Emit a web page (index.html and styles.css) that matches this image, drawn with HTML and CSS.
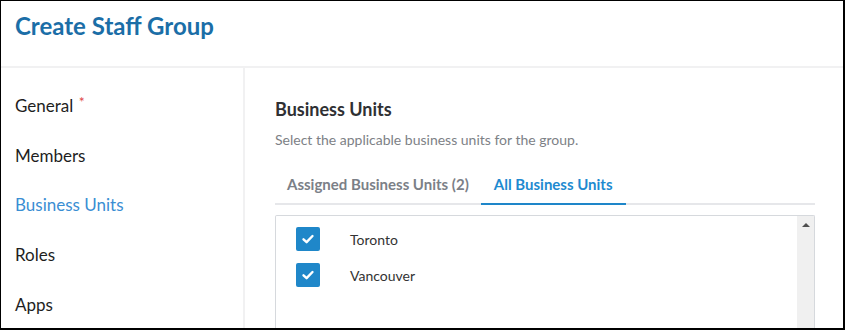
FILE: index.html
```html
<!DOCTYPE html>
<html>
<head>
<meta charset="utf-8">
<link rel="stylesheet" href="styles.css">
</head>
<body>
<div class="frame">
  <header class="header">
    <h1 class="title">Create Staff Group</h1>
  </header>
  <div class="main">
    <nav class="sidebar">
      <div class="nav-item">General <span class="req">*</span></div>
      <div class="nav-item">Members</div>
      <div class="nav-item active">Business Units</div>
      <div class="nav-item">Roles</div>
      <div class="nav-item">Apps</div>
    </nav>
    <section class="content">
      <h2 class="heading">Business Units</h2>
      <p class="desc">Select the applicable business units for the group.</p>
      <div class="tabs">
        <div class="tab">Assigned Business Units (2)</div>
        <div class="tab active">All Business Units</div>
      </div>
      <div class="listbox">
        <div class="list">
          <label class="row"><span class="check"><svg viewBox="0 0 24 24" width="24" height="24"><path d="M7.5 12.3 L10.6 15.2 L16.5 9" fill="none" stroke="#fff" stroke-width="2.4" stroke-linecap="round" stroke-linejoin="round"/></svg></span><span class="label">Toronto</span></label>
          <label class="row"><span class="check"><svg viewBox="0 0 24 24" width="24" height="24"><path d="M7.5 12.3 L10.6 15.2 L16.5 9" fill="none" stroke="#fff" stroke-width="2.4" stroke-linecap="round" stroke-linejoin="round"/></svg></span><span class="label">Vancouver</span></label>
        </div>
        <div class="scrollbar"><span class="arrow"></span></div>
      </div>
    </section>
  </div>
</div>
</body>
</html>
```

FILE: styles.css
```css
* { box-sizing: border-box; }
html, body { margin: 0; padding: 0; background: #fff; }
body { font-family: Lato, "Open Sans", sans-serif; }

.frame {
  width: 845px;
  height: 330px;
  border-left: 1px solid #000;
  border-top: 1px solid #000;
  border-right: 2px solid #000;
  border-bottom: 2px solid #000;
  display: flex;
  flex-direction: column;
  overflow: hidden;
}

.header {
  height: 67px;
  flex: none;
  border-bottom: 2px solid #f1f1f2;
  padding-left: 14px;
}
.title {
  margin: 0;
  padding-top: 8px;
  font-size: 24px;
  line-height: 34px;
  font-weight: 700;
  color: #1b6ea7;
}

.main {
  flex: 1;
  display: flex;
  min-height: 0;
}

.sidebar {
  width: 244px;
  flex: none;
  border-right: 2px solid #f1f1f2;
  padding-top: 13px;
  padding-left: 14px;
}
.nav-item {
  height: 49.7px;
  line-height: 49px;
  font-size: 17px;
  color: #1e1e1e;
}
.nav-item.active { color: #3a8ed3; }
.req {
  color: #e0484a;
  font-size: 14px;
  line-height: 0;
  vertical-align: 5px;
  margin-left: 1px;
}

.content {
  flex: 1;
  padding: 0 28px 0 30px;
  display: flex;
  flex-direction: column;
}
.heading {
  margin: 29px 0 0;
  font-size: 18px;
  line-height: 24px;
  font-weight: 700;
  color: #2f3033;
}
.desc {
  margin: 10px 0 0;
  font-size: 14px;
  line-height: 18px;
  color: #7d8186;
}
.tabs {
  margin-top: 17px;
  display: flex;
  border-bottom: 2px solid #e6e7ea;
  height: 39px;
}
.tab {
  padding: 0 12px;
  font-size: 15px;
  font-weight: 700;
  line-height: 37px;
  color: #7b8087;
  margin-bottom: -2px;
  border-bottom: 2px solid transparent;
}
.tab.active {
  color: #1e8ad0;
  border-bottom-color: #1e86c9;
  padding: 0 13px;
}

.listbox {
  margin-top: 10px;
  flex: 1;
  border: 1px solid #d6d9dd;
  border-bottom: none;
  border-radius: 2px 2px 0 0;
  display: flex;
}
.list {
  flex: 1;
  padding: 11px 0 0 20px;
  display: flex;
  flex-direction: column;
  gap: 12px;
}
.row {
  display: flex;
  align-items: center;
  height: 24px;
}
.check {
  width: 24px;
  height: 24px;
  border-radius: 2px;
  background: #1f87c9;
  display: block;
}
.check svg { display: block; }
.label {
  margin-left: 30px;
  font-size: 14px;
  color: #333;
}
.scrollbar {
  width: 17px;
  background: #f0f0f0;
  display: flex;
  justify-content: center;
  padding-top: 7px;
}
.arrow {
  width: 0;
  height: 0;
  border-left: 4px solid transparent;
  border-right: 4px solid transparent;
  border-bottom: 4px solid #505050;
}
```
